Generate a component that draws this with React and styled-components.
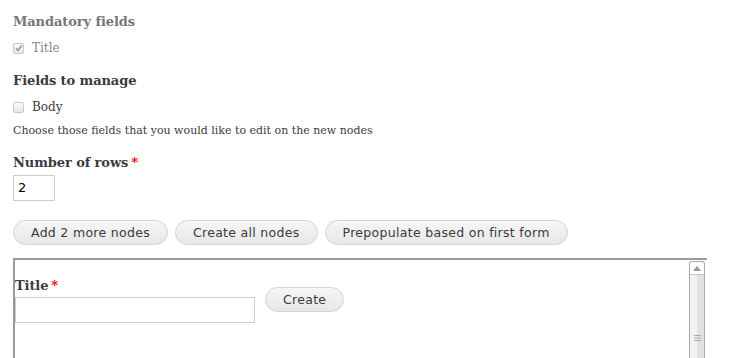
import React from "react";
import styled, { createGlobalStyle } from "styled-components";

const Global = createGlobalStyle`
  html, body { margin: 0; padding: 0; background: #fff; }
  body { font-family: "DejaVu Serif", serif; color: #3b3b3b; overflow: hidden; }
`;

const Page = styled.div`
  width: 752px;
  height: 358px;
  overflow: hidden;
  padding: 0 0 0 13px;
  box-sizing: border-box;
`;

const Heading = styled.div`
  font-family: "DejaVu Serif", serif;
  font-weight: bold;
  font-size: 13px;
  line-height: 16px;
  letter-spacing: -0.1px;
  color: ${(p) => (p.$muted ? "#777" : "#3b3b3b")};
  margin-top: ${(p) => p.$top || 0}px;
`;

const Req = styled.span`
  color: #e00;
  font-weight: bold;
  margin-left: 3px;
`;

const CheckRow = styled.label`
  display: flex;
  align-items: center;
  gap: 8px;
  height: 16px;
  margin-top: ${(p) => p.$top || 0}px;
  font-size: 12px;
  color: ${(p) => (p.$muted ? "#888" : "#3b3b3b")};
`;

const Box = styled.span`
  width: 9px;
  height: 9px;
  border: 1px solid #c8c8c8;
  border-radius: 2px;
  background: linear-gradient(#fcfcfc, #e8e8e8);
  display: flex;
  align-items: center;
  justify-content: center;
`;

const Desc = styled.div`
  font-size: 11px;
  line-height: 14px;
  margin-top: ${(p) => p.$top || 0}px;
  color: #3b3b3b;
`;

const TextInput = styled.div`
  width: ${(p) => p.$w}px;
  height: 24px;
  border: 1px solid #ccc;
  box-sizing: content-box;
  font-family: "DejaVu Sans", sans-serif;
  font-size: 13px;
  line-height: 24px;
  padding: 0 4px;
  color: #000;
  margin-top: ${(p) => p.$top || 0}px;
`;

const ButtonRow = styled.div`
  display: flex;
  gap: 7px;
  margin-top: ${(p) => p.$top || 0}px;
`;

const Button = styled.div`
  height: 23px;
  border: 1px solid #d4d4d4;
  border-radius: 13px;
  background: linear-gradient(#f6f6f6, #e7e7e7);
  font-family: "DejaVu Sans", sans-serif;
  font-size: 12.5px;
  letter-spacing: 0.3px;
  color: #3a3a3a;
  line-height: 23px;
  padding: 0 ${(p) => p.$pad || 17}px;
  white-space: nowrap;
  margin-top: ${(p) => p.$top || 0}px;
`;

const Frame = styled.div`
  margin-top: 13px;
  width: 694px;
  height: 120px;
  border-top: 2px solid #999;
  border-left: 2px solid #999;
  box-sizing: border-box;
  display: flex;
`;

const FrameBody = styled.div`
  flex: 1;
  padding-top: 18px;
`;

const NodeForm = styled.div`
  display: flex;
  align-items: flex-start;
  gap: 10px;
`;

const Field = styled.div`
  display: flex;
  flex-direction: column;
`;

const Scrollbar = styled.div`
  width: 14px;
  margin: 1px 2px 0 0;
  border: 1px solid #a8a8a8;
  border-bottom: none;
  border-radius: 3px 3px 0 0;
  display: flex;
  flex-direction: column;
  background: #fff;
`;

const ScrollBtn = styled.div`
  height: 12px;
  border-bottom: 1px solid #c4c4c4;
  display: flex;
  align-items: center;
  justify-content: center;
`;

const Thumb = styled.div`
  flex: 1;
  background: linear-gradient(90deg, #f2f2f2 0%, #f2f2f2 50%, #e2e2e2 51%, #e2e2e2 100%);
  display: flex;
  align-items: flex-start;
  justify-content: center;
  padding-top: 60px;
`;

const Check = () => (
  <svg width="8" height="8" viewBox="0 0 8 8">
    <path d="M1 4.2 L3 6.3 L7 1.2" fill="none" stroke="#999" strokeWidth="1.6" />
  </svg>
);

export default function App() {
  return (
    <Page>
      <Global />
      <Heading $muted $top={14}>Mandatory fields</Heading>
      <CheckRow $muted $top={10}>
        <Box><Check /></Box>Title
      </CheckRow>
      <Heading $top={17}>Fields to manage</Heading>
      <CheckRow $top={10}>
        <Box />Body
      </CheckRow>
      <Desc $top={9}>Choose those fields that you would like to edit on the new nodes</Desc>
      <Heading $top={17}>Number of rows<Req>*</Req></Heading>
      <TextInput $w={32} $top={4}>2</TextInput>
      <ButtonRow $top={19}>
        <Button>Add 2 more nodes</Button>
        <Button>Create all nodes</Button>
        <Button>Prepopulate based on first form</Button>
      </ButtonRow>
      <Frame>
        <FrameBody>
          <NodeForm>
            <Field>
              <Heading>Title<Req>*</Req></Heading>
              <TextInput $w={230} $top={3} />
            </Field>
            <Button $top={9}>Create</Button>
          </NodeForm>
        </FrameBody>
        <Scrollbar>
          <ScrollBtn>
            <svg width="8" height="5" viewBox="0 0 8 5"><path d="M0 5 L4 0 L8 5 Z" fill="#999" /></svg>
          </ScrollBtn>
          <Thumb>
            <svg width="7" height="6" viewBox="0 0 7 6">
              <path d="M0 0.5H7M0 3H7M0 5.5H7" stroke="#aaa" strokeWidth="1" />
            </svg>
          </Thumb>
        </Scrollbar>
      </Frame>
    </Page>
  );
}
